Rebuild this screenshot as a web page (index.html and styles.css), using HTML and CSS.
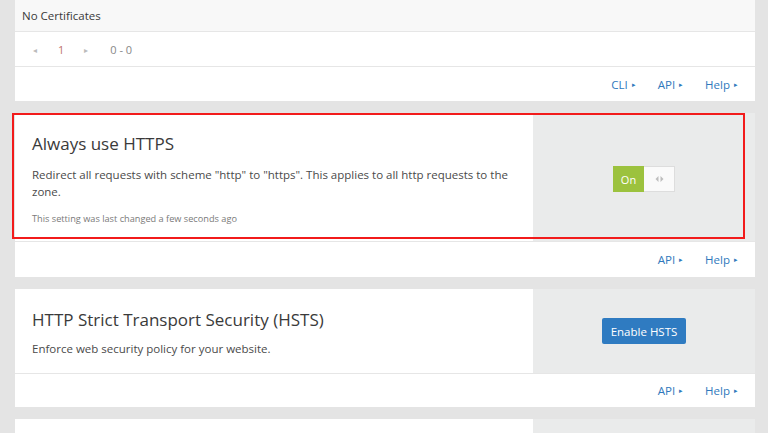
FILE: index.html
```html
<!DOCTYPE html>
<html>
<head>
<meta charset="utf-8">
<link rel="stylesheet" href="styles.css">
</head>
<body>
<div class="page">
  <section class="card">
    <div class="row row-head">No Certificates</div>
    <div class="row row-pager">
      <span class="pg-arrow">&#9666;</span>
      <span class="pg-num">1</span>
      <span class="pg-arrow">&#9656;</span>
      <span class="pg-range">0 - 0</span>
    </div>
    <div class="card-foot">
      <a class="link">CLI<span class="caret">&#9656;</span></a>
      <a class="link">API<span class="caret">&#9656;</span></a>
      <a class="link">Help<span class="caret">&#9656;</span></a>
    </div>
  </section>

  <section class="card">
    <div class="card-main main-https">
      <div class="card-text">
        <h2 class="title">Always use HTTPS</h2>
        <p class="desc">Redirect all requests with scheme "http" to "https". This applies to all http requests to the zone.</p>
        <p class="note">This setting was last changed a few seconds ago</p>
      </div>
      <div class="card-control">
        <div class="toggle">
          <span class="toggle-on">On</span>
          <span class="toggle-off">
            <svg width="9" height="6" viewBox="0 0 9 6"><path d="M3.5 0 L0.5 3 L3.5 6 Z M5.5 0 L8.5 3 L5.5 6 Z" fill="#bdbdbd"/></svg>
          </span>
        </div>
      </div>
      <div class="highlight"></div>
    </div>
    <div class="card-foot">
      <a class="link">API<span class="caret">&#9656;</span></a>
      <a class="link">Help<span class="caret">&#9656;</span></a>
    </div>
  </section>

  <section class="card">
    <div class="card-main main-hsts">
      <div class="card-text">
        <h2 class="title">HTTP Strict Transport Security (HSTS)</h2>
        <p class="desc">Enforce web security policy for your website.</p>
      </div>
      <div class="card-control">
        <button class="btn">Enable HSTS</button>
      </div>
    </div>
    <div class="card-foot">
      <a class="link">API<span class="caret">&#9656;</span></a>
      <a class="link">Help<span class="caret">&#9656;</span></a>
    </div>
  </section>

  <section class="card">
    <div class="card-main main-next">
      <div class="card-text"></div>
      <div class="card-control"></div>
    </div>
  </section>
</div>
</body>
</html>
```
FILE: styles.css
```css
* { box-sizing: border-box; }
html, body { margin: 0; padding: 0; }
body {
  background: #e4e4e4;
  font-family: "Open Sans", "Liberation Sans", sans-serif;
  color: #333;
  overflow: hidden;
  height: 433px;
}
.page {
  padding: 0 13px 0 15px;
}
.card {
  background: #fff;
  margin-bottom: 12px;
  display: flex;
  flex-direction: column;
}
.row {
  border-bottom: 1px solid #e6e6e6;
  display: flex;
  align-items: center;
}
.row-head {
  height: 32px;
  background: #f8f8f8;
  padding-left: 7px;
  font-size: 11.5px;
  color: #3a3a3a;
}
.row-pager {
  height: 35px;
  padding-left: 18px;
  font-size: 11px;
  color: #888;
}
.pg-arrow { font-size: 8px; color: #bbb; }
.pg-num { color: #c0736b; margin: 0 20px 0 21px; }
.pg-range { margin-left: 22px; color: #888; }
.card-foot {
  height: 34px;
  display: flex;
  justify-content: flex-end;
  align-items: center;
  gap: 22px;
  padding-right: 17px;
}
.card-main + .card-foot { border-top: 1px solid #e6e6e6; height: 36px; }
.main-hsts + .card-foot { height: 34px; }
.link {
  font-size: 11.5px;
  color: #3079bd;
  display: flex;
  align-items: center;
}
.caret { font-size: 7px; margin-left: 4px; }
.card-main {
  display: flex;
  position: relative;
}
.main-https { height: 128px; }
.main-hsts { height: 84px; }
.main-next { height: 40px; }
.card-text {
  width: 518px;
  padding: 19px 20px 0 17px;
}
.card-control {
  flex: 1;
  background: #eaebeb;
  display: flex;
  align-items: center;
  justify-content: center;
}
.title {
  margin: 0;
  font-size: 17px;
  font-weight: 400;
  color: #3a3a3a;
  line-height: 24px;
}
.desc {
  margin: 10px 0 0;
  font-size: 11.5px;
  line-height: 17px;
  color: #4a4a4a;
}
.main-hsts .desc { margin-top: 8px; }
.note {
  margin: 12px 0 0;
  font-size: 9.2px;
  color: #7a7a7a;
}
.toggle {
  display: flex;
  width: 62px;
  height: 26px;
  margin-top: 4px;
}
.toggle-on {
  width: 31px;
  background: #9cc23e;
  color: #fff;
  font-size: 11px;
  display: flex;
  align-items: center;
  justify-content: center;
}
.toggle-off {
  flex: 1;
  background: #fafafa;
  border: 1px solid #ddd;
  border-left: none;
  display: flex;
  align-items: center;
  justify-content: center;
}
.btn {
  width: 84px;
  height: 26px;
  border: none;
  border-radius: 2px;
  background: #2f7bc1;
  color: #fff;
  font-family: "Open Sans", "Liberation Sans", sans-serif;
  font-size: 11.5px;
  padding: 0;
}
.highlight {
  position: absolute;
  left: -3px;
  top: 0;
  width: 733px;
  height: 126px;
  border: 2px solid #f21b1b;
  pointer-events: none;
}
```
